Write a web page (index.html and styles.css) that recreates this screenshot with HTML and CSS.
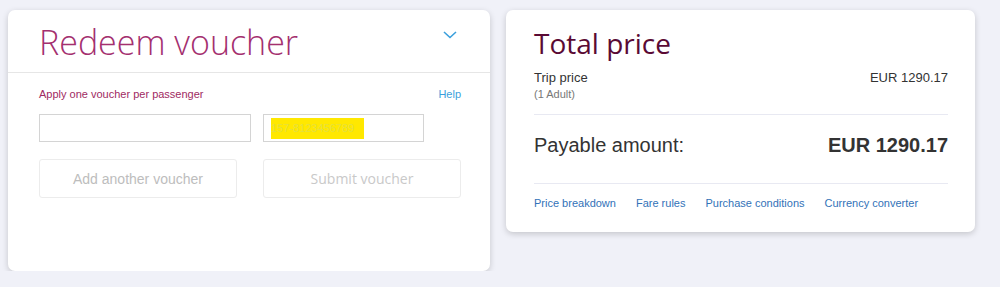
FILE: index.html
```html
<!DOCTYPE html>
<html>
<head>
<meta charset="utf-8">
<link rel="stylesheet" href="styles.css">
</head>
<body>
<div class="page">
  <section class="card voucher">
    <header class="voucher-head">
      <h2 class="voucher-title">Redeem voucher</h2>
      <svg class="chevron" width="14" height="8" viewBox="0 0 14 8"><path d="M1 1 L7 6.5 L13 1" fill="none" stroke="#3a9fdc" stroke-width="1.6"/></svg>
    </header>
    <div class="voucher-body">
      <div class="apply-row">
        <span class="apply-text">Apply one voucher per passenger</span>
        <a class="help">Help</a>
      </div>
      <div class="input-row">
        <div class="field wide"></div>
        <div class="field narrow"><span class="hl">157-8123456789</span></div>
      </div>
      <div class="btn-row">
        <div class="btn btn-add">Add another voucher</div>
        <div class="btn btn-submit">Submit voucher</div>
      </div>
    </div>
  </section>
  <section class="card total">
    <h2 class="total-title">Total price</h2>
    <div class="trip-row">
      <div>
        <div class="trip-label">Trip price</div>
        <div class="trip-sub">(1 Adult)</div>
      </div>
      <div class="trip-amount">EUR 1290.17</div>
    </div>
    <div class="pay-row">
      <span class="pay-label">Payable amount:</span>
      <span class="pay-amount">EUR 1290.17</span>
    </div>
    <nav class="links">
      <a>Price breakdown</a>
      <a>Fare rules</a>
      <a>Purchase conditions</a>
      <a>Currency converter</a>
    </nav>
  </section>
</div>
</body>
</html>
```
FILE: styles.css
```css
html, body {
  margin: 0;
  padding: 0;
  background: #f0f1f8;
  font-family: "Liberation Sans", Arial, sans-serif;
}
.page {
  display: flex;
  align-items: flex-start;
  gap: 16px;
  padding: 10px 0 0 8px;
}
.card {
  background: #fff;
  border-radius: 7px;
  box-shadow: 0 2px 6px rgba(0, 0, 0, 0.18);
  box-sizing: border-box;
}
.voucher {
  width: 482px;
  height: 261px;
}
.voucher-head {
  height: 63px;
  border-bottom: 1px solid #e6e6e6;
  display: flex;
  justify-content: space-between;
  align-items: flex-start;
  padding: 0 33px 0 31px;
  box-sizing: border-box;
}
.voucher-title {
  margin: 0;
  font-family: "Open Sans", sans-serif;
  font-weight: 300;
  font-size: 34px;
  line-height: 48px;
  padding-top: 8px;
  color: #a4306f;
}
.chevron {
  margin-top: 21px;
}
.voucher-body {
  padding: 13px 29px 0 31px;
}
.apply-row {
  display: flex;
  justify-content: space-between;
  align-items: center;
  height: 16px;
}
.apply-text {
  font-size: 11px;
  color: #a02a62;
}
.help {
  font-size: 11px;
  color: #3a9fdc;
}
.input-row {
  display: flex;
  gap: 12px;
  margin-top: 12px;
}
.field {
  height: 28px;
  border: 1px solid #d4d4d4;
  box-sizing: border-box;
  display: flex;
  align-items: center;
  padding-left: 7px;
}
.wide { width: 212px; }
.narrow { width: 161px; }
.hl {
  background: #ffe800;
  color: #e6e03c;
  font-size: 11px;
  line-height: 21px;
  padding-right: 10px;
  margin-top: 1px;
  white-space: nowrap;
}
.btn-row {
  display: flex;
  gap: 26px;
  margin-top: 17px;
}
.btn {
  width: 198px;
  height: 39px;
  border: 1px solid #ececec;
  border-radius: 3px;
  box-sizing: border-box;
  display: flex;
  align-items: center;
  justify-content: center;
  color: #bdbdbd;
}
.btn-add {
  font-size: 14px;
}
.btn-submit {
  font-family: "Open Sans", sans-serif;
  font-size: 14px;
  color: #c9c9c9;
}
.total {
  width: 469px;
  height: 222px;
  padding: 16px 27px 0 28px;
}
.total-title {
  margin: 0;
  font-family: "Open Sans", sans-serif;
  font-weight: 400;
  font-size: 28px;
  line-height: 34px;
  color: #5a0a34;
}
.trip-row {
  display: flex;
  justify-content: space-between;
  margin-top: 10px;
  padding-bottom: 11px;
  border-bottom: 1px solid #e8e9f2;
}
.trip-label {
  font-size: 13px;
  color: #333;
  line-height: 16px;
}
.trip-sub {
  font-size: 11px;
  color: #777;
  line-height: 17px;
}
.trip-amount {
  font-size: 13px;
  color: #333;
  line-height: 16px;
}
.pay-row {
  display: flex;
  justify-content: space-between;
  align-items: flex-start;
  height: 69px;
  padding-top: 18px;
  box-sizing: border-box;
  line-height: 24px;
  border-bottom: 1px solid #e8e9f2;
}
.pay-label {
  font-size: 20px;
  color: #333;
}
.pay-amount {
  font-size: 20px;
  font-weight: bold;
  color: #333;
}
.links {
  display: flex;
  gap: 20px;
  margin-top: 13px;
}
.links a {
  font-size: 11px;
  color: #3272b8;
}
```
